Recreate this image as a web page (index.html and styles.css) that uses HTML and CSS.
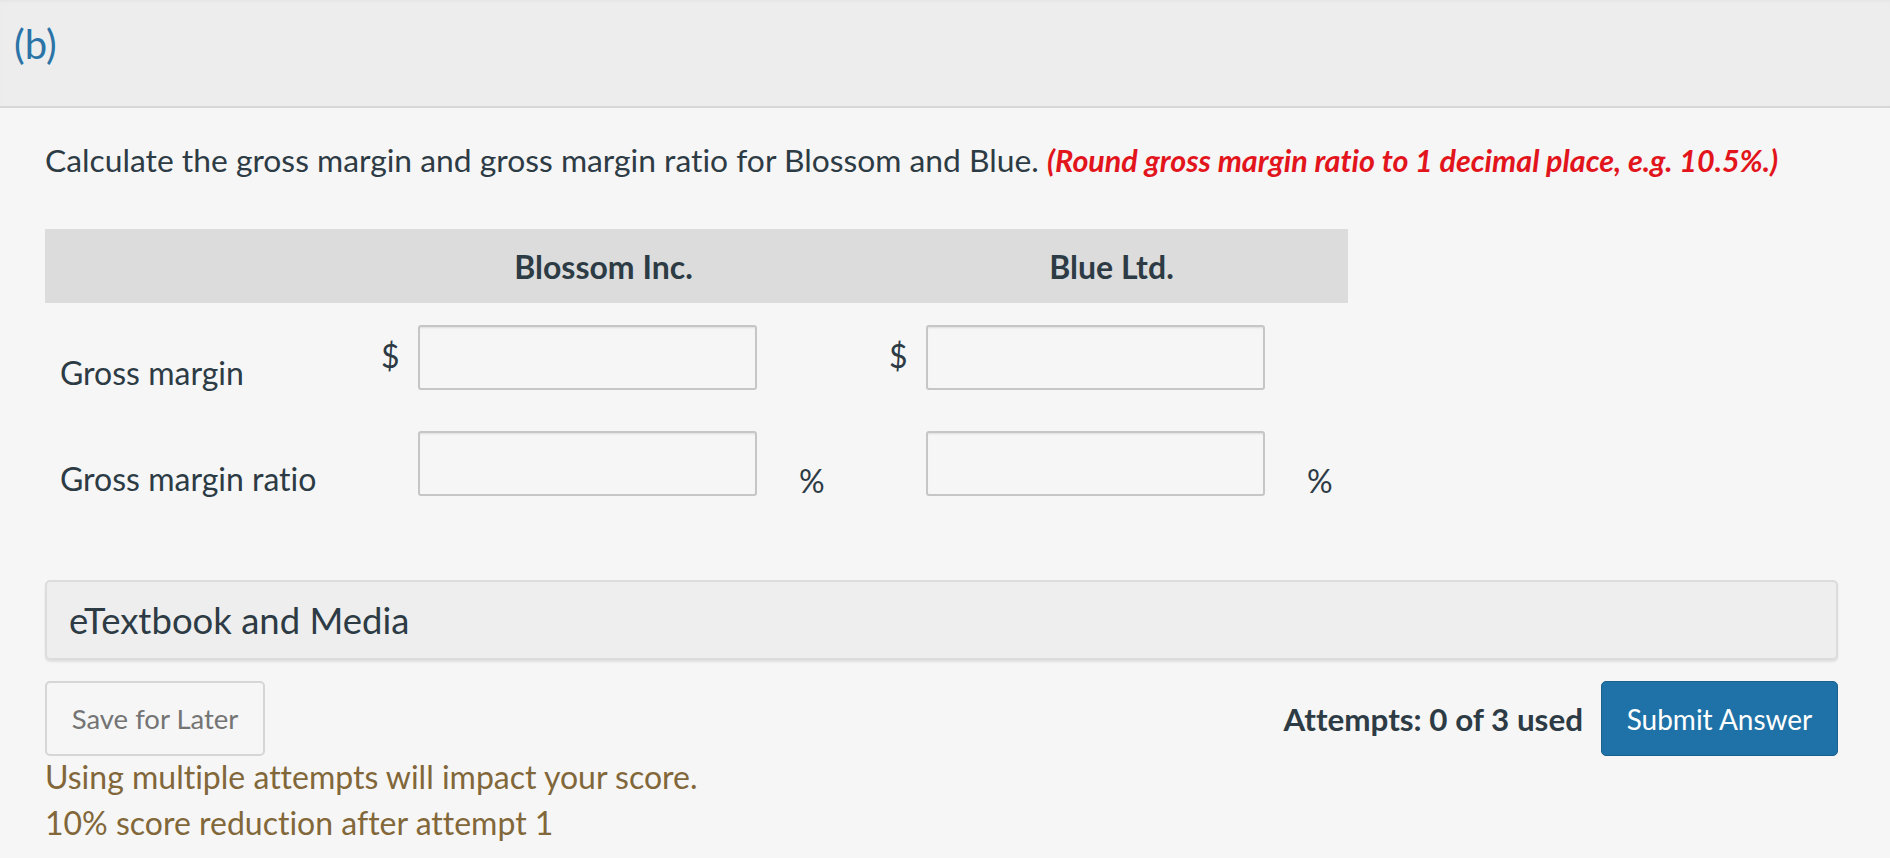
FILE: index.html
```html
<!DOCTYPE html>
<html lang="en">
<head>
<meta charset="utf-8">
<title>Question (b)</title>
<link rel="stylesheet" href="styles.css">
</head>
<body>
<div class="part-header"><span class="part-label">(b)</span></div>
<main class="content">
  <p class="question">Calculate the gross margin and gross margin ratio for Blossom and Blue. <span class="note">(Round gross margin ratio to 1 decimal place, e.g. 10.5%.)</span></p>

  <div class="answer-table">
    <div class="thead">
      <div class="th"></div>
      <div class="th">Blossom Inc.</div>
      <div class="th">Blue Ltd.</div>
    </div>
    <div class="trow">
      <div class="label">Gross margin</div>
      <div class="cell">
        <span class="pre">$</span><span class="field"></span><span class="post hidden">%</span>
      </div>
      <div class="cell">
        <span class="pre">$</span><span class="field"></span><span class="post hidden">%</span>
      </div>
    </div>
    <div class="trow">
      <div class="label">Gross margin ratio</div>
      <div class="cell">
        <span class="pre hidden">$</span><span class="field"></span><span class="post">%</span>
      </div>
      <div class="cell">
        <span class="pre hidden">$</span><span class="field"></span><span class="post">%</span>
      </div>
    </div>
  </div>

  <div class="media">eTextbook and Media</div>

  <div class="actions">
    <button class="btn-save">Save for Later</button>
    <div class="submit-group">
      <span class="attempts">Attempts: 0 of 3 used</span>
      <button class="btn-submit">Submit Answer</button>
    </div>
  </div>
  <div class="policy">
    <div>Using multiple attempts will impact your score.</div>
    <div>10% score reduction after attempt 1</div>
  </div>
</main>
</body>
</html>
```

FILE: styles.css
```css
html, body {
  margin: 0;
  padding: 0;
}
body {
  background: #f6f6f6;
  font-family: Lato, "Liberation Sans", sans-serif;
  font-variant-ligatures: none;
  color: #2d3b45;
  width: 1890px;
  height: 858px;
  overflow: hidden;
}
button {
  font-variant-ligatures: none;
}
.part-header {
  height: 106px;
  background: #ededed;
  border-bottom: 2px solid #d7d7d7;
  box-shadow: inset 0 3px 3px -2px #e2e2e2;
  padding-left: 14px;
}
.part-label {
  display: block;
  padding-top: 20px;
  font-size: 40px;
  line-height: 48px;
  color: #2b74a7;
}
.content {
  padding: 0 52px 0 45px;
}
.question {
  margin: 33px 0 0;
  font-size: 31.8px;
  line-height: 38px;
}
.note {
  color: #e2141c;
  font-weight: 700;
  font-style: italic;
  font-size: 30.5px;
}
.answer-table {
  width: 1303px;
  margin-top: 50px;
}
.thead, .trow {
  display: grid;
  grid-template-columns: 287px 543px 473px;
}
.thead {
  background: #dcdcdc;
  height: 74px;
  align-items: center;
}
.th {
  text-align: center;
  font-weight: 700;
  font-size: 32px;
}
.trow {
  height: 65px;
  margin-top: 41px;
}
.thead + .trow {
  margin-top: 22px;
}
.label {
  align-self: end;
  padding-left: 15px;
  font-size: 32px;
  line-height: 35px;
}
.cell {
  display: flex;
  justify-content: center;
  align-items: flex-start;
}
.pre {
  font-size: 32px;
  line-height: 34px;
  margin-top: 14px;
  width: 18px;
  margin-right: 19px;
}
.post {
  font-size: 32px;
  line-height: 31px;
  align-self: flex-end;
  width: 27px;
  margin-left: 42px;
}
.hidden {
  visibility: hidden;
}
.field {
  width: 339px;
  height: 65px;
  box-sizing: border-box;
  border: 2px solid #c6c6c6;
  border-radius: 3px;
  background: #f6f6f6;
  box-shadow: inset 0 2px 2px -1px #dedede;
}
.media {
  margin-top: 84px;
  height: 80px;
  box-sizing: border-box;
  background: #eeeeee;
  border: 2px solid #dcdcdc;
  border-radius: 5px;
  box-shadow: 0 2px 2px #e0e0e0;
  padding-left: 22px;
  font-size: 36.5px;
  line-height: 76px;
  color: #2d3b45;
}
.actions {
  margin-top: 21px;
  display: flex;
  justify-content: space-between;
  align-items: center;
}
.btn-save {
  width: 220px;
  height: 75px;
  box-sizing: border-box;
  border: 2px solid #d6d6d6;
  border-radius: 5px;
  background: #f6f6f6;
  color: #747474;
  font-family: Lato, "Liberation Sans", sans-serif;
  font-size: 27.5px;
  padding: 0;
}
.submit-group {
  display: flex;
  align-items: center;
  gap: 18px;
}
.attempts {
  font-size: 31.4px;
  font-weight: 700;
  color: #2d3b45;
}
.btn-submit {
  width: 237px;
  height: 75px;
  box-sizing: border-box;
  border: 1px solid #19618f;
  border-radius: 5px;
  background: #1f72a7;
  color: #ffffff;
  font-family: Lato, "Liberation Sans", sans-serif;
  font-size: 28px;
  padding: 0;
}
.policy {
  margin-top: -2px;
  font-size: 32px;
  line-height: 46px;
  color: #816739;
}
```
